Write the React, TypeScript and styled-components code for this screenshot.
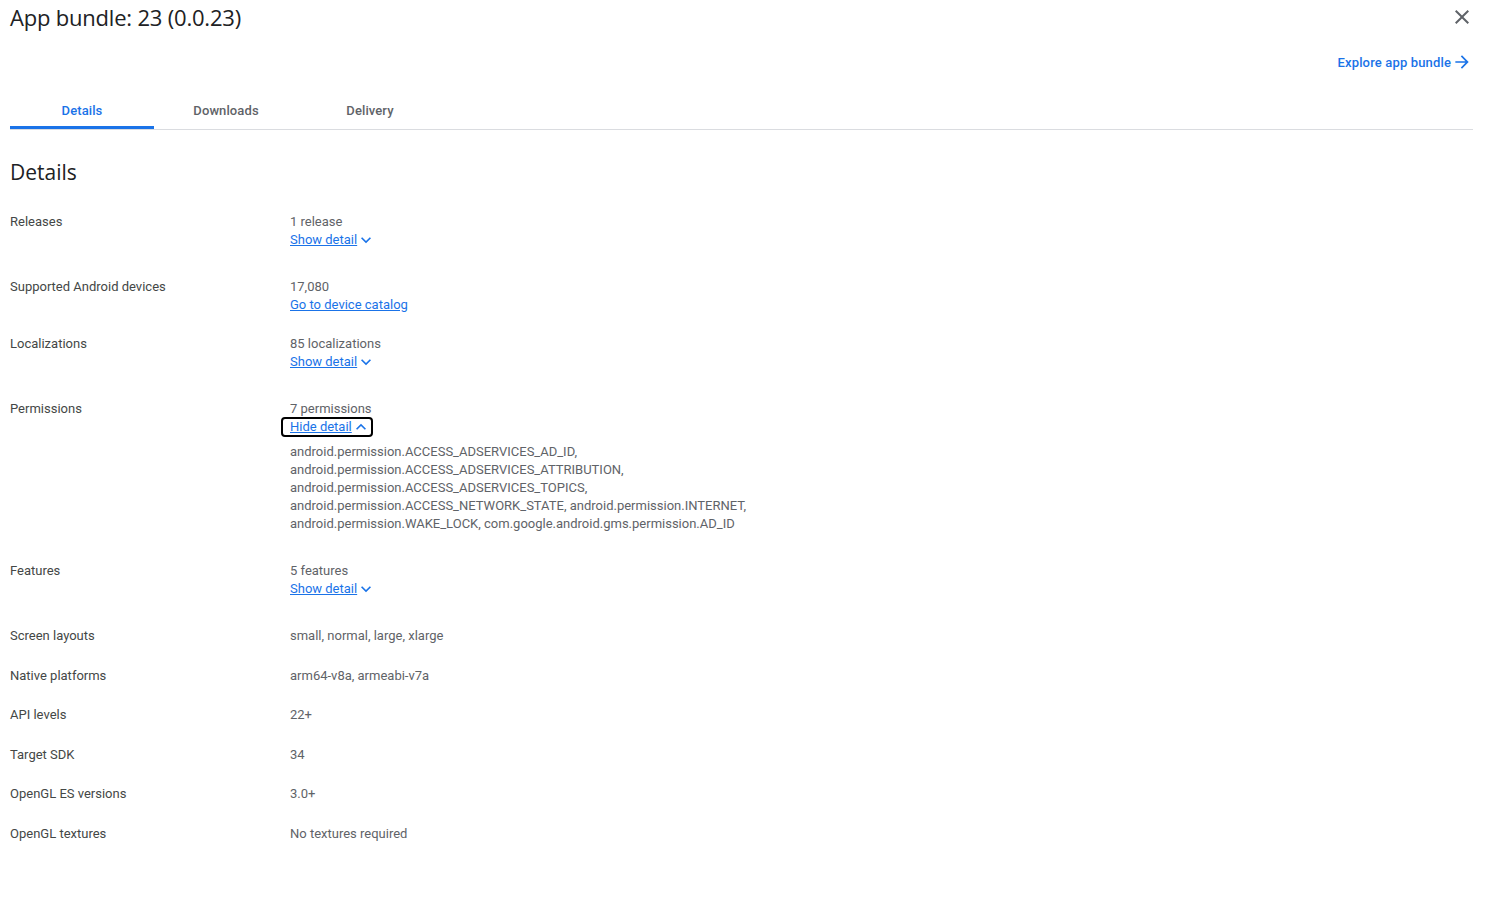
import React from "react";
import styled, { createGlobalStyle } from "styled-components";

const GlobalStyle = createGlobalStyle`
  html, body { margin: 0; padding: 0; background: #fff; }
  body { font-family: Roboto, "Liberation Sans", Arial, sans-serif; -webkit-font-smoothing: antialiased; }
  * { box-sizing: border-box; }
`;

const Page = styled.div`
  padding: 3px 12px 40px 10px;
  color: #3c4043;
`;

const Header = styled.div`
  display: flex;
  align-items: center;
  justify-content: space-between;
`;

const Title = styled.h1`
  margin: 0;
  font-family: "Open Sans", Roboto, sans-serif;
  font-size: 22px;
  line-height: 28px;
  font-weight: 400;
  color: #202124;
  letter-spacing: -0.2px;
`;

const IconButton = styled.button`
  border: 0;
  background: none;
  padding: 0;
  margin-right: -1px;
  width: 24px;
  height: 24px;
  display: flex;
  align-items: center;
  justify-content: center;
  color: #5f6368;
  cursor: pointer;
`;

const ActionRow = styled.div`
  display: flex;
  justify-content: flex-end;
  margin-top: 21px;
`;

const ExploreLink = styled.a`
  display: inline-flex;
  align-items: center;
  gap: 1px;
  height: 20px;
  font-size: 13px;
  font-weight: 500;
  letter-spacing: 0.15px;
  color: #1a73e8;
  text-decoration: none;
  margin-right: 1px;
`;

const Tabs = styled.div`
  display: flex;
  margin-top: 21px;
  border-bottom: 1px solid #dadce0;
`;

const Tab = styled.div<{ $active?: boolean }>`
  width: 144px;
  height: 36px;
  display: flex;
  align-items: center;
  justify-content: center;
  padding-top: 2px;
  font-size: 13px;
  font-weight: 500;
  letter-spacing: 0.1px;
  color: ${(p) => (p.$active ? "#1a73e8" : "#5f6368")};
  border-bottom: 3px solid ${(p) => (p.$active ? "#1a73e8" : "transparent")};
`;

const SectionTitle = styled.h2`
  margin: 28px 0 27px;
  font-family: "Open Sans", Roboto, sans-serif;
  font-size: 21px;
  line-height: 28px;
  font-weight: 400;
  color: #202124;
`;

const Rows = styled.div`
  display: flex;
  flex-direction: column;
  gap: 21.6px;
`;

const Row = styled.div`
  display: grid;
  grid-template-columns: 280px 1fr;
  font-size: 13px;
  line-height: 18px;
`;

const Label = styled.div`
  color: #444746;
`;

const Value = styled.div`
  color: #5f6368;
  display: flex;
  flex-direction: column;
  align-items: flex-start;
`;

const TextLink = styled.a`
  color: #1a73e8;
  text-decoration: underline;
  cursor: pointer;
`;

const ToggleButton = styled.button<{ $focused?: boolean }>`
  display: inline-flex;
  align-items: center;
  height: 20px;
  margin: -1px 0 6px -9px;
  padding: 0 0 0 7px;
  border: 2px solid ${(p) => (p.$focused ? "#000" : "transparent")};
  border-radius: 4px;
  background: none;
  font-family: inherit;
  font-size: 13px;
  line-height: 18px;
  color: #1a73e8;
  cursor: pointer;
  span { text-decoration: underline; }
  svg { margin-left: -1px; }
`;

const PermList = styled.div`
  padding-bottom: 8px;
`;

const CloseIcon = () => (
  <svg width="24" height="24" viewBox="0 0 24 24" fill="currentColor">
    <path d="M19 6.41L17.59 5 12 10.59 6.41 5 5 6.41 10.59 12 5 17.59 6.41 19 12 13.41 17.59 19 19 17.59 13.41 12z" />
  </svg>
);

const ArrowIcon = () => (
  <svg width="20" height="20" viewBox="0 0 24 24" fill="currentColor">
    <path d="M12 4l-1.41 1.41L16.17 11H4v2h12.17l-5.58 5.59L12 20l8-8z" />
  </svg>
);

const Chevron = ({ up }: { up?: boolean }) => (
  <svg width="20" height="20" viewBox="0 0 24 24" fill="currentColor">
    {up ? (
      <path d="M7.41 15.41L12 10.83l4.59 4.58L18 14l-6-6-6 6z" />
    ) : (
      <path d="M16.59 8.59L12 13.17 7.41 8.59 6 10l6 6 6-6z" />
    )}
  </svg>
);

const permissions = [
  "android.permission.ACCESS_ADSERVICES_AD_ID,",
  "android.permission.ACCESS_ADSERVICES_ATTRIBUTION,",
  "android.permission.ACCESS_ADSERVICES_TOPICS,",
  "android.permission.ACCESS_NETWORK_STATE, android.permission.INTERNET,",
  "android.permission.WAKE_LOCK, com.google.android.gms.permission.AD_ID",
];

const simpleRows: [string, string][] = [
  ["Screen layouts", "small, normal, large, xlarge"],
  ["Native platforms", "arm64-v8a, armeabi-v7a"],
  ["API levels", "22+"],
  ["Target SDK", "34"],
  ["OpenGL ES versions", "3.0+"],
  ["OpenGL textures", "No textures required"],
];

export default function App() {
  return (
    <>
      <GlobalStyle />
      <Page>
        <Header>
          <Title>App bundle: 23 (0.0.23)</Title>
          <IconButton aria-label="Close">
            <CloseIcon />
          </IconButton>
        </Header>
        <ActionRow>
          <ExploreLink>
            Explore app bundle
            <ArrowIcon />
          </ExploreLink>
        </ActionRow>
        <Tabs>
          <Tab $active>Details</Tab>
          <Tab>Downloads</Tab>
          <Tab>Delivery</Tab>
        </Tabs>
        <SectionTitle>Details</SectionTitle>
        <Rows>
          <Row>
            <Label>Releases</Label>
            <Value>
              1 release
              <ToggleButton>
                <span>Show detail</span>
                <Chevron />
              </ToggleButton>
            </Value>
          </Row>
          <Row>
            <Label>Supported Android devices</Label>
            <Value>
              17,080
              <TextLink>Go to device catalog</TextLink>
            </Value>
          </Row>
          <Row>
            <Label>Localizations</Label>
            <Value>
              85 localizations
              <ToggleButton>
                <span>Show detail</span>
                <Chevron />
              </ToggleButton>
            </Value>
          </Row>
          <Row>
            <Label>Permissions</Label>
            <Value>
              7 permissions
              <ToggleButton $focused>
                <span>Hide detail</span>
                <Chevron up />
              </ToggleButton>
              <PermList>
                {permissions.map((p) => (
                  <div key={p}>{p}</div>
                ))}
              </PermList>
            </Value>
          </Row>
          <Row>
            <Label>Features</Label>
            <Value>
              5 features
              <ToggleButton>
                <span>Show detail</span>
                <Chevron />
              </ToggleButton>
            </Value>
          </Row>
          {simpleRows.map(([l, v]) => (
            <Row key={l}>
              <Label>{l}</Label>
              <Value>{v}</Value>
            </Row>
          ))}
        </Rows>
      </Page>
    </>
  );
}
